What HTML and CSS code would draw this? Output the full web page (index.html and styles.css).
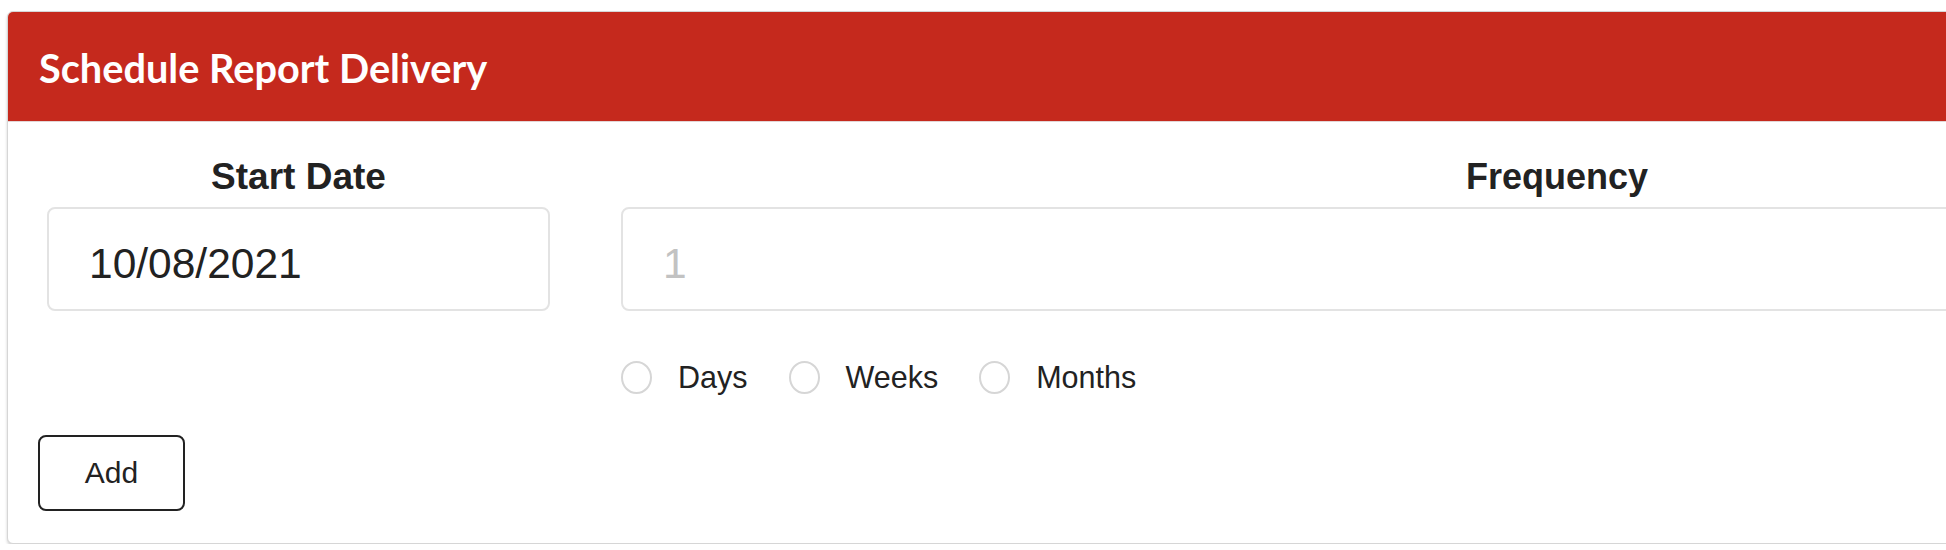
FILE: index.html
```html
<!DOCTYPE html>
<html lang="en">
<head>
<meta charset="utf-8">
<title>Schedule Report Delivery</title>
<link rel="stylesheet" href="styles.css">
</head>
<body>
<div class="page">
  <section class="card">
    <header class="card-header">
      <h1 class="card-title">Schedule Report Delivery</h1>
    </header>
    <div class="card-body">
      <div class="form-row">
        <div class="field field-start">
          <label class="field-label">Start Date</label>
          <div class="text-input">10/08/2021</div>
        </div>
        <div class="field field-frequency">
          <label class="field-label">Frequency</label>
          <div class="text-input placeholder">1</div>
          <div class="radio-group">
            <label class="radio"><input type="radio" name="unit" class="radio-box"><span>Days</span></label>
            <label class="radio"><input type="radio" name="unit" class="radio-box"><span>Weeks</span></label>
            <label class="radio"><input type="radio" name="unit" class="radio-box"><span>Months</span></label>
          </div>
        </div>
      </div>
      <button class="btn-add" type="button">Add</button>
    </div>
  </section>
</div>
</body>
</html>
```

FILE: styles.css
```css
html, body {
  margin: 0;
  padding: 0;
  background: #ffffff;
  overflow: hidden;
}

.page {
  padding: 11px 0 0 7px;
  width: 2600px;
}

.card {
  width: 2525px;
  border: 1px solid #d6d6d6;
  border-radius: 6px;
  box-shadow: 0 2px 3px rgba(0, 0, 0, 0.18);
  overflow: hidden;
  background: #ffffff;
}

.card-header {
  height: 109px;
  background: #c5291d;
  border-bottom: 1px solid #e2d6d6;
  display: flex;
  align-items: center;
  padding-left: 31px;
}

.card-title {
  margin: 0;
  font-family: Lato, "Noto Sans", sans-serif;
  font-weight: 700;
  font-size: 39.7px;
  color: #ffffff;
  line-height: 1;
  padding-top: 3px;
}

.card-body {
  padding: 34px 30px 32px 30px;
}

.form-row {
  display: flex;
  align-items: flex-start;
}

.field {
  display: flex;
  flex-direction: column;
}

.field-start {
  margin-left: 9px;
  width: 503px;
}

.field-frequency {
  margin-left: 71px;
  width: 1872px;
}

.field-label {
  display: block;
  text-align: center;
  font-family: "Liberation Sans", Arial, sans-serif;
  font-weight: 700;
  font-size: 37px;
  line-height: 41px;
  color: #222222;
  margin-bottom: 10px;
}

.field-frequency .field-label {
  font-size: 36px;
}

.text-input {
  box-sizing: border-box;
  height: 104px;
  border: 2px solid #e3e3e3;
  border-radius: 8px;
  padding: 10px 0 0 40px;
  display: flex;
  align-items: center;
  font-family: "Liberation Sans", Arial, sans-serif;
  font-size: 42.5px;
  color: #222222;
}

.text-input.placeholder {
  color: #c2c2c2;
}

.radio-group {
  display: flex;
  align-items: center;
  margin-top: 49px;
  gap: 41px;
}

.radio {
  display: flex;
  align-items: center;
  gap: 26px;
  font-family: "Liberation Sans", Arial, sans-serif;
  font-size: 30.5px;
  color: #222222;
}

.radio-box {
  appearance: none;
  -webkit-appearance: none;
  margin: 0;
  width: 31px;
  height: 33px;
  border: 2px solid #d6d6d6;
  border-radius: 50%;
  background: #ffffff;
  box-sizing: border-box;
}

.btn-add {
  display: block;
  margin-top: 40px;
  width: 147px;
  height: 76px;
  border: 2px solid #222222;
  border-radius: 8px;
  background: #ffffff;
  font-family: "Liberation Sans", Arial, sans-serif;
  font-size: 30px;
  color: #222222;
  padding: 0;
}
```
